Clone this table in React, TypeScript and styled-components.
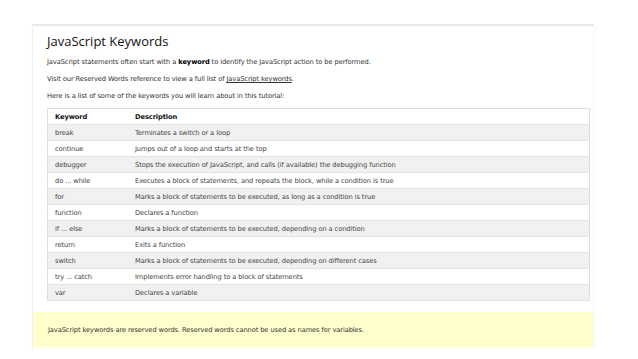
import styled, { createGlobalStyle } from "styled-components";

const GlobalStyle = createGlobalStyle`
  body {
    margin: 0;
    background: #ffffff;
    font-family: "DejaVu Sans", Verdana, sans-serif;
    color: #222222;
  }
`;

const Page = styled.div`
  padding: 24px 0 0 32px;
  width: 562px;
`;

const Panel = styled.div`
  border-top: 2px solid #e8e8e8;
  border-left: 1px solid #f2f2f2;
  border-right: 1px solid #f6f6f6;
  padding: 0 0 3px;
  box-shadow: 0 2px 3px rgba(0, 0, 0, 0.04);
`;

const Content = styled.div`
  padding: 0 3px 0 14px;
`;

const Title = styled.h1`
  margin: 4px 0 0;
  font-family: "Open Sans", "Noto Sans", sans-serif;
  font-weight: 400;
  font-size: 13px;
  line-height: 22px;
  height: 24px;
  color: #111111;
`;

const Para = styled.p`
  margin: 0;
  font-size: 6.7px;
  letter-spacing: -0.1px;
  line-height: 17px;
  color: #333333;

  b {
    color: #000000;
  }

  u {
    text-underline-offset: 1px;
  }
`;

const Table = styled.table`
  margin-top: 3px;
  width: 100%;
  border-collapse: collapse;
  border: 1px solid #dddddd;
  font-size: 6.7px;
  letter-spacing: -0.1px;
`;

const Row = styled.tr<{ $shaded: boolean }>`
  height: 16px;
  background: ${(p) => (p.$shaded ? "#f1f1f1" : "#ffffff")};
  border-bottom: 1px solid #e4e4e4;
`;

const Head = styled.th<{ $w?: number }>`
  text-align: left;
  padding: 0 7px;
  font-weight: 700;
  color: #111111;
  width: ${(p) => (p.$w ? `${p.$w}px` : "auto")};
`;

const Cell = styled.td`
  padding: 0 7px;
  color: #444444;
`;

const Note = styled.div`
  margin-top: 11px;
  background: #ffffcc;
  height: 35px;
  display: flex;
  align-items: center;
  padding-left: 15px;
  font-size: 6.7px;
  letter-spacing: -0.1px;
  color: #333333;
`;

const keywords: [string, string][] = [
  ["break", "Terminates a switch or a loop"],
  ["continue", "Jumps out of a loop and starts at the top"],
  ["debugger", "Stops the execution of JavaScript, and calls (if available) the debugging function"],
  ["do ... while", "Executes a block of statements, and repeats the block, while a condition is true"],
  ["for", "Marks a block of statements to be executed, as long as a condition is true"],
  ["function", "Declares a function"],
  ["if ... else", "Marks a block of statements to be executed, depending on a condition"],
  ["return", "Exits a function"],
  ["switch", "Marks a block of statements to be executed, depending on different cases"],
  ["try ... catch", "Implements error handling to a block of statements"],
  ["var", "Declares a variable"],
];

export default (): JSX.Element => {
  return (
    <>
      <GlobalStyle />
      <Page>
        <Panel>
          <Content>
            <Title>JavaScript Keywords</Title>
            <Para>
              JavaScript statements often start with a <b>keyword</b> to identify the JavaScript
              action to be performed.
            </Para>
            <Para>
              Visit our Reserved Words reference to view a full list of <u>JavaScript keywords</u>.
            </Para>
            <Para>Here is a list of some of the keywords you will learn about in this tutorial:</Para>
            <Table>
              <thead>
                <Row $shaded={false}>
                  <Head $w={66}>Keyword</Head>
                  <Head>Description</Head>
                </Row>
              </thead>
              <tbody>
                {keywords.map(([word, desc], i) => (
                  <Row key={word} $shaded={i % 2 === 0}>
                    <Cell>{word}</Cell>
                    <Cell>{desc}</Cell>
                  </Row>
                ))}
              </tbody>
            </Table>
          </Content>
          <Note>JavaScript keywords are reserved words. Reserved words cannot be used as names for variables.</Note>
        </Panel>
      </Page>
    </>
  );
};
